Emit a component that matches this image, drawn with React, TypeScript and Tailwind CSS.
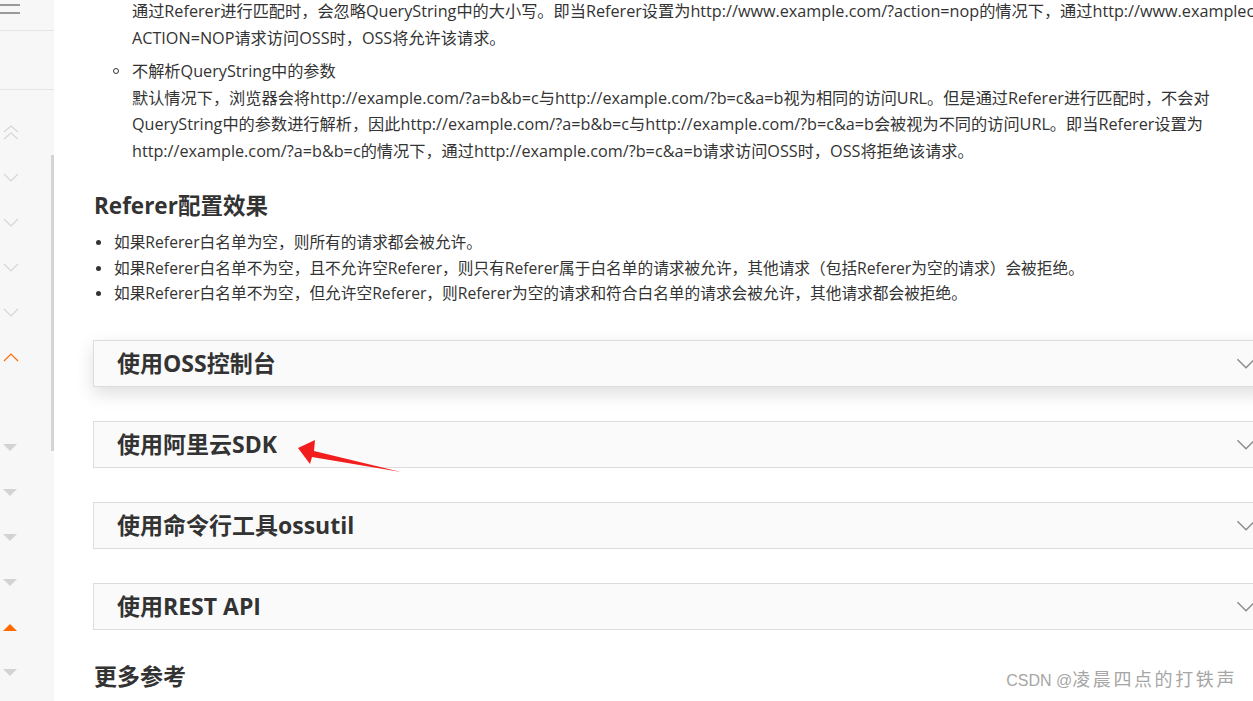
import React from 'react';

const sans = "font-['Open_Sans','Noto_Sans_CJK_SC',sans-serif]";

const ChevronDown = ({ className = '' }: { className?: string }) => (
  <svg width="16" height="9" viewBox="0 0 16 9" className={className} fill="none" stroke="currentColor" strokeWidth="1.2">
    <polyline points="1,1 8,8 15,1" />
  </svg>
);

const ChevronUp = ({ className = '' }: { className?: string }) => (
  <svg width="16" height="9" viewBox="0 0 16 9" className={className} fill="none" stroke="currentColor" strokeWidth="1.2">
    <polyline points="1,8 8,1 15,8" />
  </svg>
);

const DoubleUp = () => (
  <svg width="16" height="15" viewBox="0 0 16 15" className="text-[#d6d6d6]" fill="none" stroke="currentColor" strokeWidth="1.2">
    <polyline points="1,7 8,1 15,7" />
    <polyline points="1,14 8,8 15,14" />
  </svg>
);

const Triangle = ({ up = false }: { up?: boolean }) => (
  <svg width="14" height="7" viewBox="0 0 14 7" className={up ? 'text-[#ff6a00]' : 'text-[#d3d3d3]'} fill="currentColor">
    {up ? <polygon points="0,7 7,0 14,7" /> : <polygon points="0,0 14,0 7,7" />}
  </svg>
);

const Sidebar = () => {
  const rows: React.ReactNode[] = [
    <DoubleUp />,
    <ChevronDown className="text-[#d6d6d6]" />,
    <ChevronDown className="text-[#d6d6d6]" />,
    <ChevronDown className="text-[#d6d6d6]" />,
    <ChevronDown className="text-[#d6d6d6]" />,
    <ChevronUp className="text-[#ff6a00]" />,
    null,
    <Triangle />,
    <Triangle />,
    <Triangle />,
    <Triangle />,
    <Triangle up />,
    <Triangle />,
  ];
  return (
    <aside className="relative w-[54px] shrink-0 bg-[#f7f7f7] h-[701px]">
      <div className="h-[31px] border-b border-[#e4e4e4] pt-[4px] flex flex-col gap-[6px]">
        <div className="w-[20px] h-[2px] bg-[#9a9a9a]" />
        <div className="w-[20px] h-[2px] bg-[#9a9a9a]" />
      </div>
      <div className="h-[59px] border-b border-[#e4e4e4]" />
      <div className="pt-[20px] flex flex-col">
        {rows.map((r, i) => (
          <div key={i} className="h-[45px] flex items-center pl-[3px]">
            {r}
          </div>
        ))}
      </div>
      <div className="absolute left-[51px] top-[155px] w-[3px] h-[296px] bg-[#d4d4d4]" />
    </aside>
  );
};

const Accordion = ({ title, raised = false }: { title: string; raised?: boolean }) => (
  <div
    className={`h-[47px] w-[1176px] border border-[#dcdcdc] bg-[#fafafa] flex items-center justify-between pl-[23px] pr-[12px] ${
      raised ? 'shadow-[0_7px_18px_rgba(0,0,0,0.13)]' : ''
    }`}
  >
    <span className="text-[23px] font-bold text-[#333] leading-[30px]">{title}</span>
    <ChevronDown className="text-[#8c8c8c] w-[20px] h-[11px]" />
  </div>
);

export default function App() {
  return (
    <div className={`relative w-[1253px] h-[701px] overflow-hidden bg-white flex ${sans}`}>
      <Sidebar />
      <main className="flex-1 overflow-hidden pl-[40px]">
        <div className="w-[1200px]">
          <div className="pl-[38px] text-[16.2px] leading-[26.5px] text-[#333] -mt-[2px]">
            <p className="whitespace-nowrap">
              通过Referer进行匹配时，会忽略QueryString中的大小写。即当Referer设置为http://www.example.com/?action=nop的情况下，通过http://www.examplecom/?ACTION=NOP
            </p>
            <p className="whitespace-nowrap">ACTION=NOP请求访问OSS时，OSS将允许该请求。</p>
            <div className="relative mt-[7px]">
              <span className="absolute -left-[19px] top-[10px] w-[6px] h-[6px] rounded-full border border-[#333]" />
              <p className="whitespace-nowrap">不解析QueryString中的参数</p>
              <p className="whitespace-nowrap">
                默认情况下，浏览器会将http://example.com/?a=b&amp;b=c与http://example.com/?b=c&amp;a=b视为相同的访问URL。但是通过Referer进行匹配时，不会对
              </p>
              <p className="whitespace-nowrap">
                QueryString中的参数进行解析，因此http://example.com/?a=b&amp;b=c与http://example.com/?b=c&amp;a=b会被视为不同的访问URL。即当Referer设置为
              </p>
              <p className="whitespace-nowrap">
                http://example.com/?a=b&amp;b=c的情况下，通过http://example.com/?b=c&amp;a=b请求访问OSS时，OSS将拒绝该请求。
              </p>
            </div>
          </div>

          <h2 className="mt-[27px] text-[22.5px] leading-[30px] font-bold text-[#333]">Referer配置效果</h2>
          <ul className="mt-[9px] text-[15.7px] leading-[25.5px] text-[#333]">
            {[
              '如果Referer白名单为空，则所有的请求都会被允许。',
              '如果Referer白名单不为空，且不允许空Referer，则只有Referer属于白名单的请求被允许，其他请求（包括Referer为空的请求）会被拒绝。',
              '如果Referer白名单不为空，但允许空Referer，则Referer为空的请求和符合白名单的请求会被允许，其他请求都会被拒绝。',
            ].map((t) => (
              <li key={t} className="flex items-center whitespace-nowrap">
                <span className="w-[5px] h-[5px] rounded-full bg-[#333] ml-[2px] mr-[13px] shrink-0" />
                {t}
              </li>
            ))}
          </ul>

          <div className="mt-[33px] -ml-[1px] flex flex-col gap-[34px]">
            <Accordion title="使用OSS控制台" raised />
            <Accordion title="使用阿里云SDK" />
            <Accordion title="使用命令行工具ossutil" />
            <Accordion title="使用REST API" />
          </div>

          <h2 className="mt-[31px] text-[23px] leading-[30px] font-bold text-[#333]">更多参考</h2>
        </div>
      </main>

      <svg className="absolute left-0 top-0 pointer-events-none" width="1253" height="701">
        <polygon points="298,448 315,440 314,451 401,472 312,457 310,464" fill="#f21d1d" />
      </svg>

      <div className="absolute right-[16px] bottom-[8px] flex items-baseline text-[#a6a6a6] whitespace-nowrap">
        <span className="text-[16px] font-['Liberation_Sans',sans-serif]">CSDN @</span>
        <span className="text-[18px] tracking-[2.6px] font-['Noto_Sans_CJK_SC',sans-serif]">凌晨四点的打铁声</span>
      </div>
    </div>
  );
}
